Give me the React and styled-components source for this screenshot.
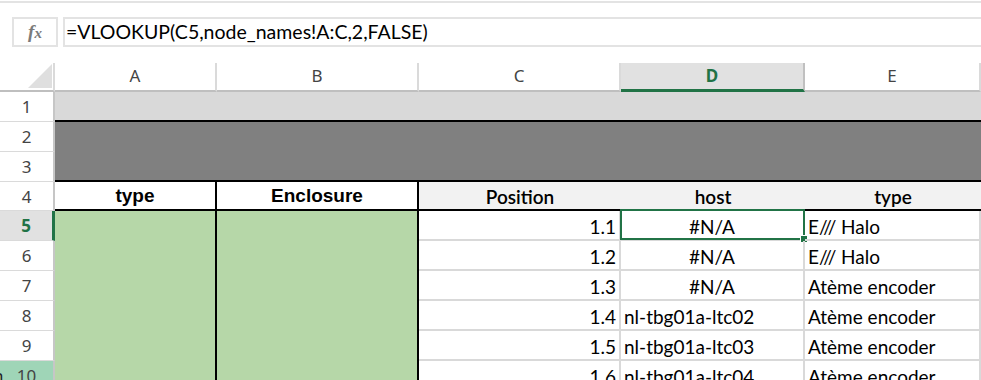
import styled, {createGlobalStyle} from "styled-components";

const GlobalStyle = createGlobalStyle`
  html, body {
    margin: 0;
    padding: 0;
    background: #fff;
    overflow: hidden;
  }
  body {
    width: 981px;
    height: 380px;
  }
`;

const XL_GREEN = "#217346";
const GRID = "#d9d9d9";

const Page = styled.div`
  width: 981px;
  height: 380px;
  overflow: hidden;
  padding-top: 1px;
  box-sizing: border-box;
`;

const TopRule = styled.div`
  height: 2px;
  background: #e3e3e3;
`;

const FormulaBar = styled.div`
  display: flex;
  gap: 5px;
  height: 30px;
  margin: 14px 0 16px 12px;
`;

const FxBox = styled.div`
  width: 46px;
  box-sizing: border-box;
  border: 2px solid #e3e3e3;
  display: flex;
  align-items: baseline;
  justify-content: center;
  padding-top: 2px;
  font-family: "Liberation Serif", serif;
  font-style: italic;
  font-weight: bold;
  color: #7b7b7b;
  font-size: 19px;
  line-height: 22px;

  small {
    font-size: 15px;
    margin-left: 0;
  }
`;

const FormulaInput = styled.div`
  flex: 1;
  box-sizing: border-box;
  border: 2px solid #e3e3e3;
  border-right: none;
  display: flex;
  align-items: center;
  padding: 0 0 1px 1px;
  font-family: Lato, "Liberation Sans", sans-serif;
  font-size: 19.5px;
  color: #000;
  white-space: nowrap;
`;

const Sheet = styled.div`
  display: grid;
  grid-template-columns: 55px 162px 202px 202px 184px 1fr;
  grid-template-rows: 29px 30px 30px 30px 29px repeat(6, 30px);
`;

const Corner = styled.div`
  box-sizing: border-box;
  border-right: 2px solid #dadada;
  border-bottom: 2px solid #bfbfbf;
  display: flex;
  align-items: flex-end;
  justify-content: flex-end;
  padding: 0 1px 2px 0;
`;

const ColHead = styled.div`
  box-sizing: border-box;
  display: flex;
  align-items: center;
  justify-content: center;
  font-family: "Noto Sans", sans-serif;
  font-size: 17px;
  padding-bottom: 2px;
  color: ${p => (p.$active ? XL_GREEN : "#444")};
  font-weight: ${p => (p.$active ? 700 : 400)};
  background: ${p => (p.$active ? "#e1e1e1" : "#fff")};
  border-right: 2px solid ${p => (p.$active ? "#c0c0c0" : "#dadada")};
  border-bottom: ${p => (p.$active ? `3px solid ${XL_GREEN}` : "2px solid #bfbfbf")};
`;

const RowHead = styled.div`
  position: relative;
  box-sizing: border-box;
  display: flex;
  align-items: center;
  justify-content: center;
  font-family: "Noto Sans", sans-serif;
  font-size: 17px;
  color: ${p => (p.$active ? XL_GREEN : "#444")};
  font-weight: ${p => (p.$active ? 700 : 400)};
  background: ${p => (p.$active ? "#e1e1e1" : p.$hover ? "#9fd5b7" : "#fff")};
  border-right: ${p => (p.$active ? `3px solid ${XL_GREEN}` : "2px solid #c6c6c6")};
  border-bottom: 1px solid #dadada;
`;

const Peek = styled.span`
  position: absolute;
  left: -7px;
  top: 3px;
  font-family: "Noto Sans", sans-serif;
  font-weight: 400;
  color: #222;
`;

const Band = styled.div`
  grid-column: 2 / -1;
  grid-row: ${p => (p.$rows > 1 ? `span ${p.$rows}` : "auto")};
  background: ${p => p.$fill};
  border-bottom: 2px solid #000;
  box-sizing: border-box;
`;

const Title = styled.div`
  box-sizing: border-box;
  display: flex;
  align-items: center;
  justify-content: center;
  background: #fff;
  border-right: 2px solid #000;
  border-bottom: 2px solid #000;
  font-family: "Liberation Sans", Arial, sans-serif;
  font-weight: bold;
  font-size: 19px;
  color: #000;
`;

const HeadCell = styled.div`
  box-sizing: border-box;
  display: flex;
  align-items: center;
  justify-content: center;
  background: #f2f2f2;
  border-bottom: 2px solid #000;
  font-family: Lato, "Liberation Sans", sans-serif;
  font-weight: 600;
  font-size: 19px;
  color: #000;
  padding-top: 2px;
`;

const GreenCell = styled.div`
  background: #b6d7a8;
  border-right: 2px solid #000;
  box-sizing: border-box;
`;

const DataCell = styled.div`
  position: relative;
  box-sizing: border-box;
  display: flex;
  align-items: center;
  justify-content: ${p => ({left: "flex-start", center: "center", right: "flex-end"}[p.$align])};
  padding: 2px 3px 0 3px;
  border-right: 2px solid ${GRID};
  border-bottom: 2px solid ${GRID};
  font-family: Lato, "Liberation Sans", sans-serif;
  font-size: 19px;
  color: #000;
  white-space: nowrap;
  overflow: hidden;
`;

const SelectedCell = styled(DataCell)`
  overflow: visible;
`;

const Selection = styled.div`
  position: absolute;
  top: -2px;
  left: -1px;
  right: -2px;
  bottom: -1px;
  border: 2px solid ${XL_GREEN};
  pointer-events: none;
`;

const Handle = styled.div`
  position: absolute;
  right: -5px;
  bottom: -5px;
  width: 6px;
  height: 6px;
  background: ${XL_GREEN};
  border: 1px solid #fff;
`;

const rows = [
  {pos: "1.1", host: "#N/A", type: "E/// Halo"},
  {pos: "1.2", host: "#N/A", type: "E/// Halo"},
  {pos: "1.3", host: "#N/A", type: "Atème encoder"},
  {pos: "1.4", host: "nl-tbg01a-ltc02", type: "Atème encoder"},
  {pos: "1.5", host: "nl-tbg01a-ltc03", type: "Atème encoder"},
  {pos: "1.6", host: "nl-tbg01a-ltc04", type: "Atème encoder"},
];

function CornerMark() {
  return (
    <svg width="24" height="24" viewBox="0 0 24 24">
      <polygon points="24,0 24,24 0,24" fill="#dfdfdf" />
    </svg>
  );
}

export default function App() {
  return (
    <Page>
      <GlobalStyle />
      <TopRule />
      <FormulaBar>
        <FxBox>f<small>x</small></FxBox>
        <FormulaInput>=VLOOKUP(C5,node_names!A:C,2,FALSE)</FormulaInput>
      </FormulaBar>

      <Sheet>
        <Corner><CornerMark /></Corner>
        {["A", "B", "C", "D", "E"].map(c => (
          <ColHead key={c} $active={c === "D"}>{c}</ColHead>
        ))}

        <RowHead>1</RowHead>
        <Band $fill="#d9d9d9" />

        <RowHead>2</RowHead>
        <Band $fill="#808080" $rows={2} />
        <RowHead>3</RowHead>

        <RowHead>4</RowHead>
        <Title>type</Title>
        <Title>Enclosure</Title>
        <HeadCell>Position</HeadCell>
        <HeadCell>host</HeadCell>
        <HeadCell>type</HeadCell>

        {rows.map((r, i) => {
          const n = i + 5;
          const Host = n === 5 ? SelectedCell : DataCell;
          return [
            <RowHead key={`h${n}`} $active={n === 5} $hover={n === 10}>
              {n === 10 && <Peek>n</Peek>}
              {n}
            </RowHead>,
            <GreenCell key={`a${n}`} />,
            <GreenCell key={`b${n}`} />,
            <DataCell key={`c${n}`} $align="right">{r.pos}</DataCell>,
            <Host key={`d${n}`} $align={r.host === "#N/A" ? "center" : "left"}>
              {r.host}
              {n === 5 && <Selection><Handle /></Selection>}
            </Host>,
            <DataCell key={`e${n}`} $align="left">{r.type}</DataCell>,
          ];
        })}
      </Sheet>
    </Page>
  );
}
